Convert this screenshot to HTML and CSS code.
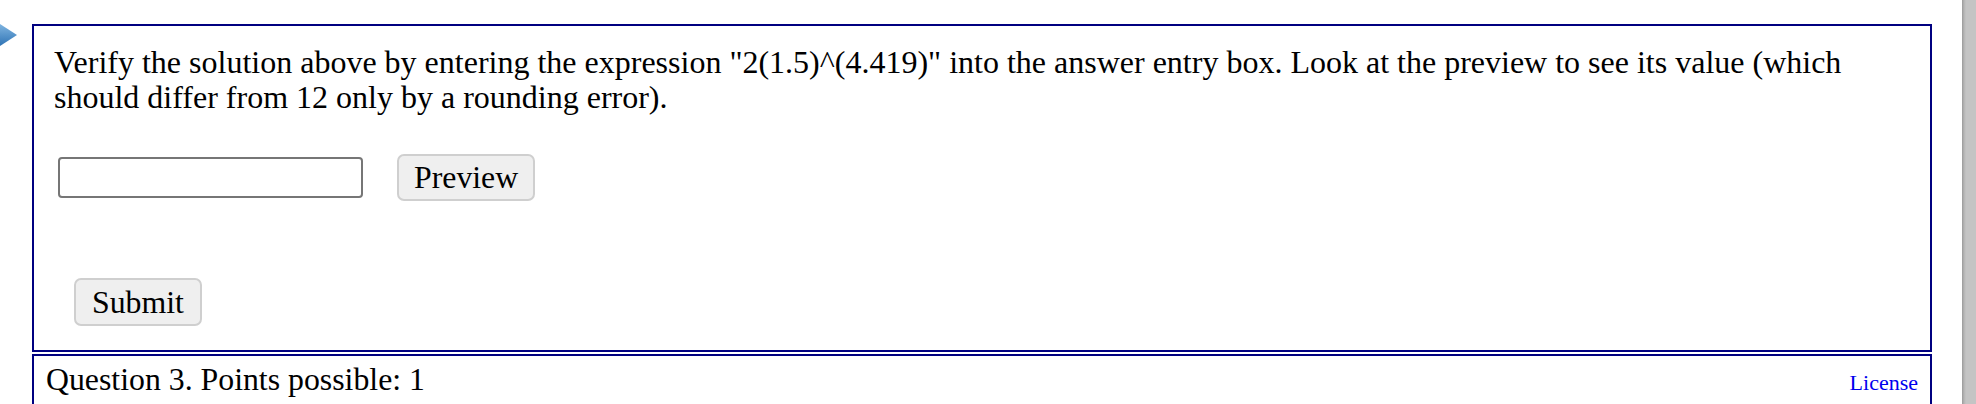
FILE: index.html
```html
<!DOCTYPE html>
<html>
<head>
<meta charset="utf-8">
<link rel="stylesheet" href="styles.css">
</head>
<body>
<div class="page">
  <div class="marker">
    <svg class="arrow" width="18" height="22" viewBox="0 0 18 22">
      <defs>
        <linearGradient id="ag" x1="0" y1="0" x2="0" y2="1">
          <stop offset="0" stop-color="#7fb4e0"/>
          <stop offset="1" stop-color="#2f74b5"/>
        </linearGradient>
      </defs>
      <polygon points="0,0 17,11 0,22" fill="url(#ag)"/>
    </svg>
  </div>
  <div class="questions">
    <div class="qbox">
      <p class="prompt">Verify the solution above by entering the expression "2(1.5)^(4.419)" into the answer entry box. Look at the preview to see its value (which should differ from 12 only by a rounding error).</p>
      <div class="answer-row">
        <input class="answer" type="text">
        <button class="btn preview">Preview</button>
      </div>
      <div class="submit-row">
        <button class="btn">Submit</button>
      </div>
    </div>
    <div class="qhead">
      <span class="qtitle">Question 3. Points possible: 1</span>
      <a class="license" href="#">License</a>
    </div>
  </div>
  <div class="scrollbar"></div>
</div>
</body>
</html>
```

FILE: styles.css
```css
html, body {
  margin: 0;
  padding: 0;
  background: #ffffff;
  height: 100%;
  overflow: hidden;
}

.page {
  display: flex;
  height: 404px;
  font-family: "Liberation Serif", "Times New Roman", serif;
  color: #000;
}

.marker {
  width: 32px;
  flex: none;
  padding-top: 24px;
}

.arrow {
  display: block;
}

.questions {
  flex: 1;
  margin-right: 30px;
  padding-top: 24px;
  display: flex;
  flex-direction: column;
  gap: 2px;
}

.qbox {
  border: 2px solid #000080;
  padding: 19px 20px 24px 20px;
}

.prompt {
  margin: 0;
  font-size: 32px;
  line-height: 35px;
}

.answer-row {
  display: flex;
  align-items: center;
  margin-top: 39px;
  padding-left: 4px;
  gap: 34px;
}

.answer {
  width: 305px;
  height: 41px;
  box-sizing: border-box;
  border: 2px solid #767676;
  border-radius: 4px;
  margin: 0;
  padding: 0 6px;
  font-family: "Liberation Serif", "Times New Roman", serif;
  font-size: 24px;
  background: #fff;
}

.btn {
  font-family: "Liberation Serif", "Times New Roman", serif;
  font-size: 31.8px;
  line-height: 35px;
  height: 47px;
  box-sizing: border-box;
  padding: 4px 15px;
  margin: 0;
  border: 2px solid #cfcfcf;
  border-radius: 7px;
  background: #efefef;
  color: #000;
}

.submit-row {
  margin-top: 77px;
  padding-left: 20px;
  display: flex;
}

.submit-row .btn {
  height: 48px;
  padding: 4px 16px;
}

.qhead {
  border: 2px solid #000080;
  border-bottom: none;
  padding: 6px 12px 0 12px;
  display: flex;
  justify-content: space-between;
  align-items: baseline;
  flex: 1;
}

.qtitle {
  font-size: 31.8px;
  line-height: 35px;
}

.license {
  font-size: 22px;
  color: #0000ee;
  text-decoration: none;
}

.scrollbar {
  width: 14px;
  flex: none;
  background: linear-gradient(to right, #9a9a9a 0, #b4b4b4 2px, #c4c4c4 4px, #c4c4c4 100%);
}
```
